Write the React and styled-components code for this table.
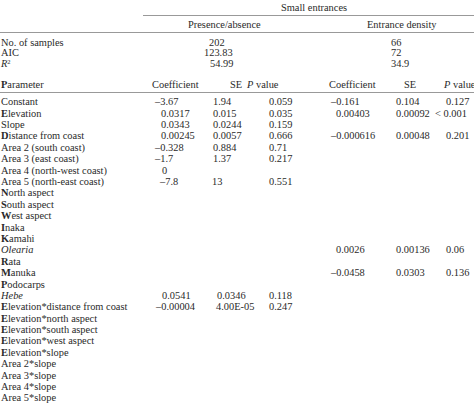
import React from "react";
import styled, { createGlobalStyle } from "styled-components";

const Global = createGlobalStyle`
  html, body { margin: 0; padding: 0; background: #fff; overflow: hidden; }
  body {
    font-family: "Liberation Serif", "Times New Roman", serif;
    font-size: 10.4px;
    color: #2a2a2a;
  }
`;

const COLS = "143px 62px 40px 75px 65px 45px 44px";
const RULE = "1px solid #999";

const Table = styled.div`
  width: 474px;
`;

const Row = styled.div`
  display: grid;
  grid-template-columns: ${COLS};
  line-height: ${(p) => p.$lh || 11.4}px;
  height: ${(p) => p.$lh || 11.4}px;
`;

const TopRow = styled.div`
  display: grid;
  grid-template-columns: ${COLS};
  height: 16px;
`;

const SpanHead = styled.div`
  grid-column: 2 / -1;
  box-sizing: border-box;
  height: 16px;
  line-height: 15px;
  border-bottom: ${RULE};
  padding-left: 138px;
  white-space: nowrap;
`;

const GroupRow = styled.div`
  display: grid;
  grid-template-columns: ${COLS};
  box-sizing: border-box;
  height: 17px;
  padding-top: 2px;
  line-height: 14px;
  border-bottom: ${RULE};
`;

const Group = styled.div`
  grid-column: ${(p) => p.$cols};
  padding-left: ${(p) => p.$pad}px;
  white-space: nowrap;
`;

const Summary = styled.div`
  padding-top: 4.6px;
`;

const HeadRow = styled.div`
  display: grid;
  grid-template-columns: ${COLS};
  margin-top: 9.3px;
  line-height: 11.4px;
  padding-bottom: 1.1px;
  border-bottom: ${RULE};
`;

const Body = styled.div`
  padding-top: 3.5px;
`;

const Cell = styled.div`
  grid-column: ${(p) => p.$cols || "auto"};
  padding-left: ${(p) => p.$pad || 0}px;
  white-space: nowrap;
  font-style: ${(p) => (p.$italic ? "italic" : "normal")};
  &::first-letter {
    font-weight: ${(p) => (p.$lead ? 700 : "inherit")};
  }
`;

const Sup = styled.sup`
  font-size: 6.5px;
  line-height: 0;
  vertical-align: 3.5px;
`;

const Pv = () => (
  <>
    <i>P</i> value
  </>
);

// Column paddings relative to column starts (143, 205, 245, 320, 385, 430)
const NEG1 = 12, POS1 = 18, SE1 = 8, P1 = 24, NEG4 = 11, POS4 = 16, SE5 = 11, P6 = 16;

const rows = [
  { label: "Constant", cells: [["–3.67", NEG1], ["1.94", SE1], ["0.059", P1], ["–0.161", NEG4], ["0.104", SE5], ["0.127", P6]] },
  { label: "Elevation", lead: true, cells: [["0.0317", POS1], ["0.015", SE1], ["0.035", P1], ["0.00403", POS4], ["0.00092", SE5], ["< 0.001", 5]] },
  { label: "Slope", cells: [["0.0343", POS1], ["0.0244", SE1], ["0.159", P1]] },
  { label: "Distance from coast", lead: true, cells: [["0.00245", POS1], ["0.0057", SE1], ["0.666", P1], ["–0.000616", NEG4], ["0.00048", SE5], ["0.201", P6]] },
  { label: "Area 2 (south coast)", cells: [["–0.328", NEG1], ["0.884", SE1], ["0.71", P1]] },
  { label: "Area 3 (east coast)", cells: [["–1.7", NEG1], ["1.37", SE1], ["0.217", P1]] },
  { label: "Area 4 (north-west coast)", cells: [["0", 19]] },
  { label: "Area 5 (north-east coast)", cells: [["–7.8", 17], ["13", 7], ["0.551", P1]] },
  { label: "North aspect", lead: true },
  { label: "South aspect", lead: true },
  { label: "West aspect", lead: true },
  { label: "Inaka", lead: true },
  { label: "Kamahi", lead: true },
  { label: "Olearia", italic: true, cells: [null, null, null, ["0.0026", POS4], ["0.00136", SE5], ["0.06", P6]] },
  { label: "Rata", lead: true },
  { label: "Manuka", lead: true, cells: [null, null, null, ["–0.0458", NEG4], ["0.0303", SE5], ["0.136", P6]] },
  { label: "Podocarps", lead: true },
  { label: "Hebe", italic: true, cells: [["0.0541", 19], ["0.0346", 12], ["0.118", P1]] },
  { label: "Elevation*distance from coast", lead: true, cells: [["–0.00004", 13], ["4.00E-05", 11], ["0.247", P1]] },
  { label: "Elevation*north aspect", lead: true },
  { label: "Elevation*south aspect", lead: true },
  { label: "Elevation*west aspect", lead: true },
  { label: "Elevation*slope", lead: true },
  { label: "Area 2*slope" },
  { label: "Area 3*slope" },
  { label: "Area 4*slope" },
  { label: "Area 5*slope" },
];

const summary = [
  { label: "No. of samples", pa: ["202", 66], ed: ["66", 71] },
  { label: "AIC", pa: ["123.83", 61], ed: ["72", 71] },
  {
    label: (
      <>
        <i>R</i>
        <Sup>2</Sup>
      </>
    ),
    pa: ["54.99", 67],
    ed: ["34.9", 71],
  },
];

export default function App() {
  return (
    <>
      <Global />
      <Table>
        <TopRow>
          <SpanHead>Small entrances</SpanHead>
        </TopRow>
        <GroupRow>
          <Group $cols="2 / 5" $pad={45}>Presence/absence</Group>
          <Group $cols="5 / 8" $pad={47}>Entrance density</Group>
        </GroupRow>
        <Summary>
          {summary.map((s, i) => (
            <Row key={i} $lh={10.8}>
              <Cell $pad={1}>{s.label}</Cell>
              <Cell $cols="2 / 5" $pad={s.pa[1]}>{s.pa[0]}</Cell>
              <Cell $cols="5 / 8" $pad={s.ed[1]}>{s.ed[0]}</Cell>
            </Row>
          ))}
        </Summary>
        <HeadRow>
          <Cell $pad={1} $lead>Parameter</Cell>
          <Cell $pad={9}>Coefficient</Cell>
          <Cell $pad={25}>SE</Cell>
          <Cell $pad={2}><Pv /></Cell>
          <Cell $pad={9}>Coefficient</Cell>
          <Cell $pad={19}>SE</Cell>
          <Cell $pad={14}><Pv /></Cell>
        </HeadRow>
        <Body>
          {rows.map((r, i) => (
            <Row key={i}>
              <Cell $pad={1} $lead={r.lead} $italic={r.italic}>{r.label}</Cell>
              {(r.cells || []).map((c, j) =>
                c ? (
                  <Cell key={j} $pad={c[1]}>{c[0]}</Cell>
                ) : (
                  <Cell key={j} />
                )
              )}
            </Row>
          ))}
        </Body>
      </Table>
    </>
  );
}
